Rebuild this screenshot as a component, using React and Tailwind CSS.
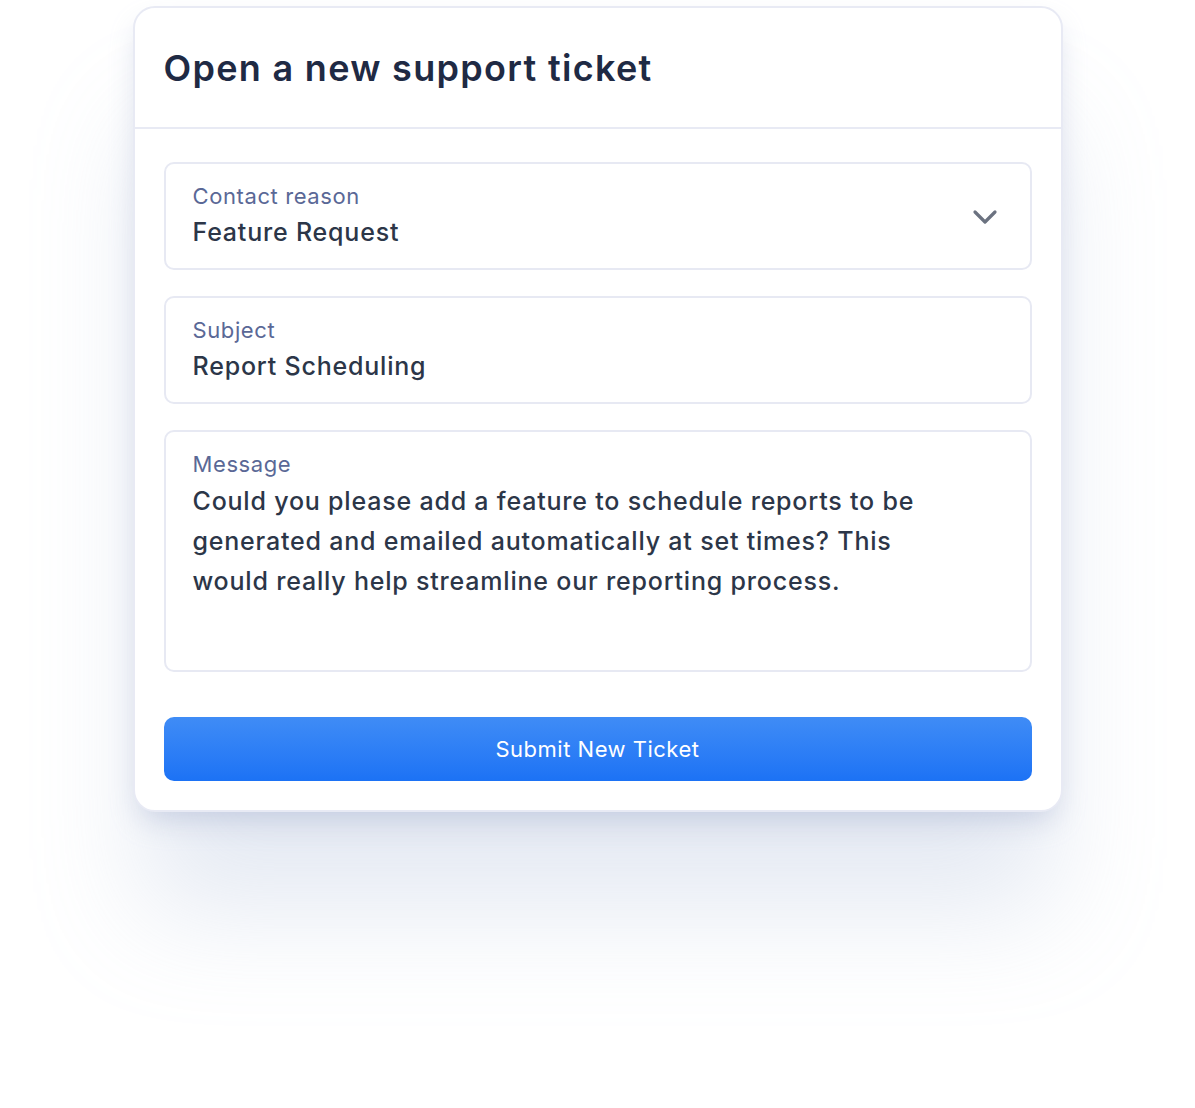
import React from 'react';

const Field = ({ label, children, className = '', right = null }) => (
  <div className={`flex items-start justify-between border-2 border-[#e7e9f3] rounded-[10px] px-[27px] ${className}`}>
    <div className="flex flex-col">
      <span className="text-[22px] leading-[30px] tracking-[0.6px] text-[#5a6896]">{label}</span>
      {children}
    </div>
    {right}
  </div>
);

export default function App() {
  return (
    <div className="w-full min-h-[1108px] bg-white flex justify-center pt-[6px]" style={{ fontFamily: 'Inter, "Noto Sans", sans-serif' }}>
      <div className="w-[930px] h-[806px] bg-white rounded-[22px] border-2 border-[#e8eaf4] flex flex-col shadow-[0_14px_30px_-8px_rgba(150,165,200,0.45),0_110px_110px_-10px_rgba(170,185,215,0.3)]">
        {/* Header */}
        <div className="h-[121px] flex items-center px-[29px] border-b-2 border-[#e8eaf4] shrink-0">
          <h1 className="text-[36px] font-semibold text-[#1f2a44] tracking-[1.3px]">Open a new support ticket</h1>
        </div>

        {/* Form */}
        <div className="flex flex-col px-[29px] pt-[33px] gap-[26px]">
          <Field
            label="Contact reason"
            className="h-[108px] pt-[17px]"
            right={
              <svg width="26" height="16" viewBox="0 0 26 16" className="mt-[28px] mr-[5px]" fill="none">
                <path d="M3 3l10 10L23 3" stroke="#6b7280" strokeWidth="3.2" strokeLinecap="round" strokeLinejoin="round" />
              </svg>
            }
          >
            <span className="text-[25px] leading-[40px] tracking-[0.8px] font-medium text-[#2c3648] mt-[1px]">Feature Request</span>
          </Field>

          <Field label="Subject" className="h-[108px] pt-[17px]">
            <span className="text-[25px] leading-[40px] tracking-[0.8px] font-medium text-[#2c3648] mt-[1px]">Report Scheduling</span>
          </Field>

          <Field label="Message" className="h-[242px] pt-[17px]">
            <p className="text-[25px] leading-[40px] tracking-[0.8px] font-medium text-[#2c3648] max-w-[760px] mt-[2px]">
              Could you please add a feature to schedule reports to be generated and emailed automatically at set times? This would really help streamline our reporting process.
            </p>
          </Field>

          <button className="mt-[19px] h-[64px] w-full rounded-[10px] bg-gradient-to-b from-[#3f8cf6] to-[#1c72f5] text-white text-[22px] tracking-[0.5px]">
            Submit New Ticket
          </button>
        </div>
      </div>
    </div>
  );
}
